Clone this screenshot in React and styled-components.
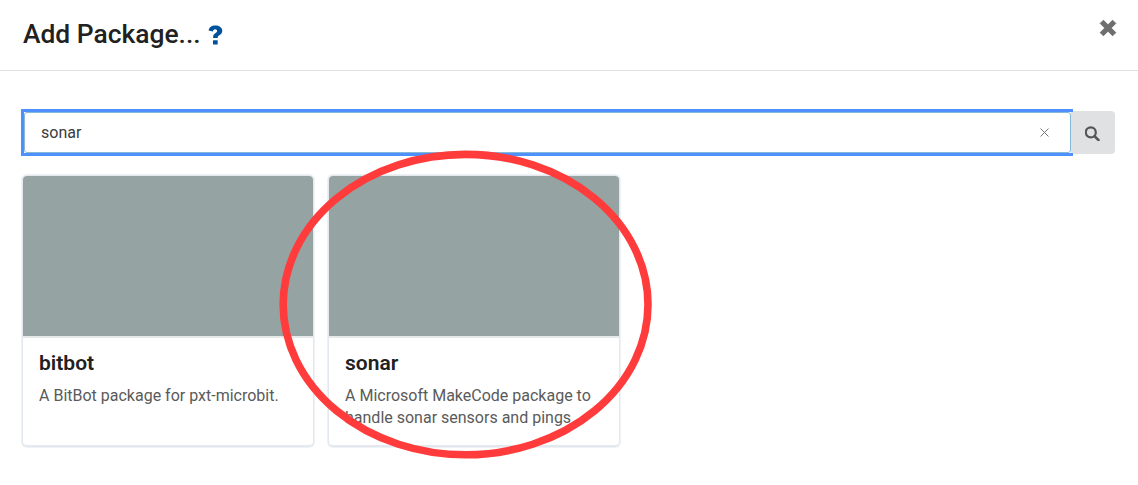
import React from 'react'
import styled, { createGlobalStyle } from 'styled-components'

const GlobalStyle = createGlobalStyle`
    html, body {
        margin: 0;
        padding: 0;
        background: #fff;
    }
    body {
        font-family: Roboto, "Liberation Sans", sans-serif;
        color: #212121;
    }
`;

const Page = styled.div`
    width: 1138px;
    height: 485px;
    overflow: hidden;
`;

const Header = styled.div`
    height: 70px;
    border-bottom: 1px solid #e0e0e0;
    padding-left: 23px;
    position: relative;
    display: flex;
    align-items: center;
`;

const Title = styled.h2`
    margin: 0;
    font-size: 26.4px;
    font-weight: 500;
    color: #212121;
    line-height: 68px;
    height: 70px;
`;

const Help = styled.svg`
    margin-left: 7px;
`;

const Close = styled.svg`
    position: absolute;
    top: 19px;
    right: 21px;
`;

const Content = styled.div`
    padding: 38px 23px 0 21px;
`;

const SearchRow = styled.div`
    display: flex;
    align-items: center;
    height: 47px;
`;

const InputBox = styled.div`
    position: relative;
    width: 1047px;
    height: 41px;
    margin-left: 3px;
    box-sizing: border-box;
    border: 1px solid #85b7d9;
    border-radius: 3px;
    display: flex;
    align-items: center;
    padding: 0 20px 0 16px;
    justify-content: space-between;
    font-size: 16px;
    color: #3a3a3a;

    &::before {
        content: "";
        position: absolute;
        top: -4px;
        bottom: -4px;
        left: -4px;
        right: -3px;
        border: 3px solid #4d90fe;
        border-right: 0;
        pointer-events: none;
    }
`;

const SearchButton = styled.div`
    width: 44px;
    height: 43px;
    background: #e0e1e2;
    border-radius: 0 4px 4px 0;
    display: flex;
    align-items: center;
    justify-content: center;
`;

const Cards = styled.div`
    display: flex;
    gap: 14px;
    margin: 19px 0 0 1px;
`;

const Card = styled.div`
    width: 292px;
    height: 272px;
    box-sizing: border-box;
    border: 1px solid #e3e9ef;
    border-bottom-width: 2px;
    border-radius: 5px;
    background: #fff;
    box-shadow: 0 0 0 1px #eef2f5;
    overflow: hidden;
`;

const Thumb = styled.div`
    height: 160px;
    background: #95a3a2;
    border-bottom: 2px solid #e6e9ea;
`;

const CardBody = styled.div`
    padding: 13px 16px 0 16px;
`;

const CardName = styled.div`
    font-size: 21px;
    font-weight: 600;
    line-height: 24px;
    color: #212121;
`;

const CardDesc = styled.div`
    margin-top: 10px;
    font-size: 16px;
    line-height: 22px;
    color: #5a5a5a;
`;

const Overlay = styled.div`
    position: absolute;
    inset: 0;
    pointer-events: none;
`;

const Circle = styled.svg`
    position: absolute;
    left: 276px;
    top: 147px;
`;

const packages = [
    { name: 'bitbot', desc: 'A BitBot package for pxt-microbit.' },
    { name: 'sonar', desc: 'A Microsoft MakeCode package to handle sonar sensors and pings' },
]

const App = () => {
    return (
        <Page>
            <GlobalStyle />
            <Header>
                <Title>Add Package...</Title>
                <Help width="15" height="20" viewBox="0 0 15 20">
                    <path d="M.6 5.6C1 2.2 3.6.4 7.4.4c3.8 0 6.9 2 6.9 5.3 0 2.4-1.4 3.5-2.9 4.5-1.2.8-1.7 1.3-1.7 2.4v.5H5.1v-.9c0-2.1.9-3.1 2.2-4 1-.7 1.8-1.2 1.8-2.2 0-1-.8-1.7-1.9-1.7-1.2 0-2 .7-2.3 2.2z" fill="#00529b" />
                    <rect x="5" y="15.2" width="4.7" height="4.4" rx="0.4" fill="#00529b" />
                </Help>
                <Close width="18" height="18" viewBox="0 0 18 18">
                    <path d="M4.4 1.2 9 5.8l4.6-4.6 3.2 3.2L12.2 9l4.6 4.6-3.2 3.2L9 12.2l-4.6 4.6-3.2-3.2L5.8 9 1.2 4.4z" fill="#6e6e6e" stroke="#6e6e6e" strokeLinejoin="round" />
                </Close>
            </Header>
            <Content>
                <SearchRow>
                    <InputBox>
                        <span>sonar</span>
                        <svg width="11" height="11" viewBox="0 0 11 11">
                            <path d="M1.5 1.5l8 8M9.5 1.5l-8 8" stroke="#777" strokeWidth="1" fill="none" />
                        </svg>
                    </InputBox>
                    <SearchButton>
                        <svg width="16" height="16" viewBox="0 0 16 16">
                            <circle cx="5.8" cy="7.4" r="5" stroke="#555" strokeWidth="2.2" fill="none" />
                            <path d="M9.5 11.1l4 4" stroke="#555" strokeWidth="2.6" strokeLinecap="round" />
                        </svg>
                    </SearchButton>
                </SearchRow>
                <Cards>
                    {packages.map(p => (
                        <Card key={p.name}>
                            <Thumb />
                            <CardBody>
                                <CardName>{p.name}</CardName>
                                <CardDesc>{p.desc}</CardDesc>
                            </CardBody>
                        </Card>
                    ))}
                </Cards>
            </Content>
            <Overlay>
                <Circle width="380" height="316" viewBox="0 0 380 316">
                    <ellipse cx="189.6" cy="157.6" rx="182.4" ry="150.2" fill="none" stroke="#ff3b3b" strokeWidth="7.6" />
                </Circle>
            </Overlay>
        </Page>
    )
}

export default App
